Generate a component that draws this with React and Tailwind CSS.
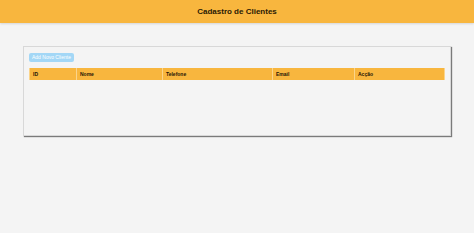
export default function App() {
    // Column widths measured from the reference header row
    const columns = [
        { label: 'ID', w: 'w-[47px]' },
        { label: 'Nome', w: 'w-[86px]' },
        { label: 'Telefone', w: 'w-[110px]' },
        { label: 'Email', w: 'w-[82px]' },
        { label: 'Acção', w: 'w-[90px]' },
    ];

    return (
        <div className="min-h-[233px] bg-[#f4f4f4] font-['Liberation_Sans',Arial,sans-serif]">
            <header className="h-[23px] bg-[#f8b63e] flex items-center justify-center shadow-[0_1px_2px_rgba(0,0,0,0.12)]">
                <h1 className="text-[8px] font-bold text-[#2a1a05] leading-none">Cadastro de Clientes</h1>
            </header>

            <div className="pt-[23px] pl-[23px]">
                <div className="w-[428px] h-[90px] bg-[#f4f4f4] border border-[#d8d8d8] shadow-[1px_1px_1px_#7a7a7a] pt-[6px] px-[5px]">
                    <button className="h-[9px] px-[3px] rounded-[2px] bg-[#a3d7f6] text-white text-[5px] leading-none flex items-center">
                        Add Novo Cliente
                    </button>

                    <table className="mt-[6px] border-collapse">
                        <thead>
                            <tr className="bg-[#f8b63e]">
                                {columns.map((c) => (
                                    <th
                                        key={c.label}
                                        className={`${c.w} h-[12px] px-[3px] text-left text-[5px] font-bold text-[#1f1405] border-x border-[#fbd48a] leading-none`}
                                    >
                                        {c.label}
                                    </th>
                                ))}
                            </tr>
                        </thead>
                        <tbody></tbody>
                    </table>
                </div>
            </div>
        </div>
    );
}
